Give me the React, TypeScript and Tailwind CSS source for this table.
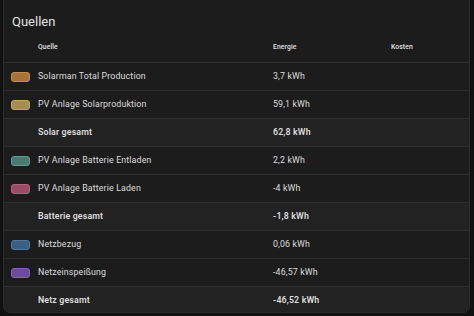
import React from "react";

type Row = {
  name: string;
  energy: string;
  fill?: string;
  border?: string;
  total?: boolean;
};

const rows: Row[] = [
  { name: "Solarman Total Production", energy: "3,7 kWh", fill: "#a5733b", border: "#c68f4c" },
  { name: "PV Anlage Solarproduktion", energy: "59,1 kWh", fill: "#a38c57", border: "#c2a86a" },
  { name: "Solar gesamt", energy: "62,8 kWh", total: true },
  { name: "PV Anlage Batterie Entladen", energy: "2,2 kWh", fill: "#487a72", border: "#5f9d92" },
  { name: "PV Anlage Batterie Laden", energy: "-4 kWh", fill: "#9a4c66", border: "#bb6080" },
  { name: "Batterie gesamt", energy: "-1,8 kWh", total: true },
  { name: "Netzbezug", energy: "0,06 kWh", fill: "#3c5e80", border: "#4f78a2" },
  { name: "Netzeinspeißung", energy: "-46,57 kWh", fill: "#6a4d94", border: "#8663b6" },
  { name: "Netz gesamt", energy: "-46,52 kWh", total: true },
];

export default function App() {
  return (
    <div
      className="w-[474px] h-[316px] overflow-hidden bg-[#111111] pl-[3px] pr-[4px]"
      style={{ fontFamily: "Roboto, 'Liberation Sans', sans-serif" }}
    >
      <div className="-mt-[6px] h-[319px] rounded-[7px] border border-[#2c2c2c] bg-[#1c1c1c] overflow-hidden">
        <div className="h-[38px] pl-[8px] pt-[20px] text-[13px] leading-[14px] text-[#e3e3e3]">
          Quellen
        </div>
        <div className="flex h-[30px] items-center text-[6.8px] font-medium tracking-[0.1px] text-[#e1e1e1] border-b border-[#2e2e2e]">
          <div className="w-[34px]" />
          <div className="w-[235px]">Quelle</div>
          <div className="w-[118px]">Energie</div>
          <div>Kosten</div>
        </div>
        {rows.map((r) => (
          <div
            key={r.name}
            className={
              "flex h-[28px] items-center border-b border-[#2e2e2e] text-[8.8px] tracking-[0.15px] text-[#dedede] " +
              (r.total ? "bg-[#222222] font-semibold" : "")
            }
          >
            <div className="w-[34px] pl-[7px] flex items-center">
              {r.fill ? (
                <div
                  className="w-[19px] h-[10px] rounded-[3px] border"
                  style={{ backgroundColor: r.fill, borderColor: r.border }}
                />
              ) : null}
            </div>
            <div className="w-[235px]">{r.name}</div>
            <div className="w-[118px]">{r.energy}</div>
            <div />
          </div>
        ))}
      </div>
    </div>
  );
}
